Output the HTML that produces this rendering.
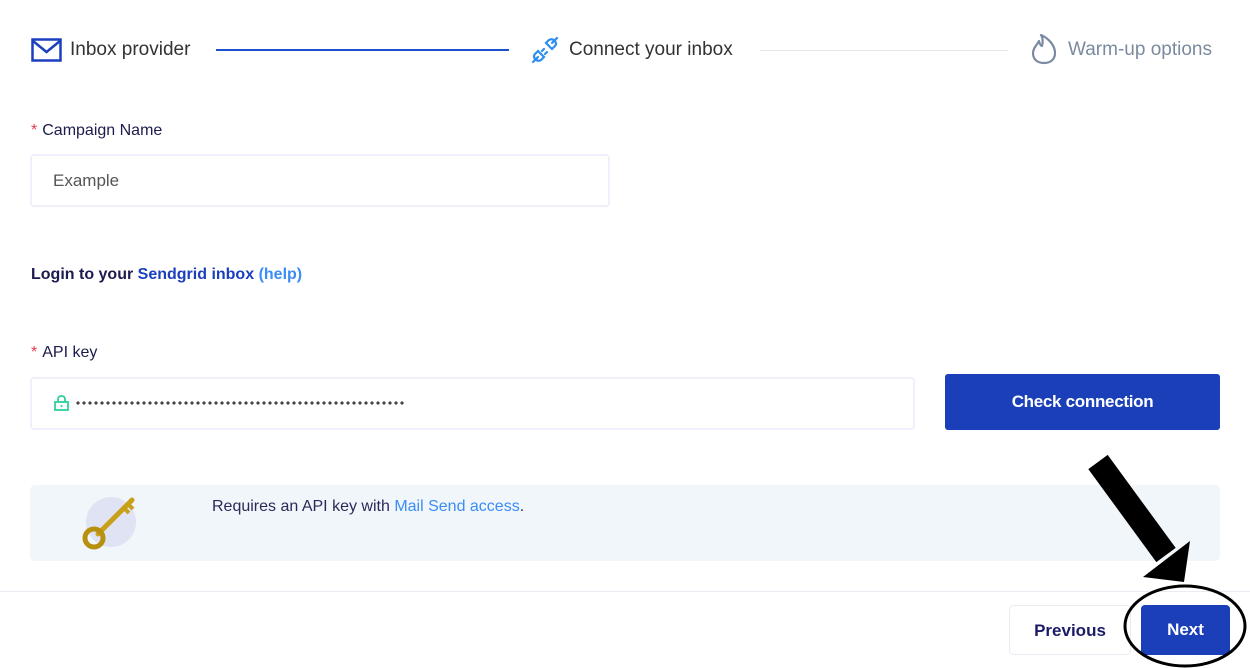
<!DOCTYPE html>
<html><head><meta charset="utf-8"><style>
*{box-sizing:border-box;margin:0;padding:0}
body{width:1250px;height:668px;background:#fff;font-family:"Liberation Sans",sans-serif;position:relative;overflow:hidden;color:#1b1b4d}
.a{position:absolute}
.lbl{font-size:16px;color:#1b1b4d;font-weight:500}
.lbl span{color:#e53950;margin-right:5px}
.inp{border:2px solid #eef1fb;border-radius:4px;background:#fff}
</style></head><body>
<svg class="a" style="left:31px;top:38px" width="31" height="24" viewBox="0 0 31 24"><rect x="1.5" y="1.5" width="28" height="21" fill="none" stroke="#1a3fbf" stroke-width="2.5"/><path d="M2 3 L15.5 14 L29 3" fill="none" stroke="#1a3fbf" stroke-width="2.5"/></svg>
<div class="a" style="left:70px;top:39px;font-size:19px;color:#333">Inbox provider</div>
<div class="a" style="left:216px;top:49px;width:293px;height:2px;background:#1a4fd0"></div>
<svg class="a" style="left:530px;top:35px" width="30" height="30" viewBox="0 0 30 30" fill="none" stroke="#2b8ef0" stroke-width="2.2" stroke-linecap="round"><path d="M3 27 L8 22"/><path d="M8 16 L14 22 L11 25 Q8 27 5 24 Q3 21 5 19 Z"/><path d="M27 3 L22 8"/><path d="M22 14 L16 8 L19 5 Q22 3 25 6 Q27 9 25 11 Z"/><path d="M12 16 L14 14 M15 19 L17 17"/></svg>
<div class="a" style="left:569px;top:39px;font-size:19px;color:#333">Connect your inbox</div>
<div class="a" style="left:760px;top:50px;width:248px;height:1px;background:#e6e8ee"></div>
<svg class="a" style="left:1031px;top:34px" width="26" height="31" viewBox="0 0 26 31" fill="none" stroke="#7a8aa0" stroke-width="2.2" stroke-linejoin="round"><path d="M13 29 C5 29 2 24 2 19 C2 14 6 11 8 7 C9 11 10 12 11 12 C12 8 12 4 10 1 C17 4 24 11 24 19 C24 25 20 29 13 29 Z"/></svg>
<div class="a" style="left:1068px;top:39px;font-size:19px;color:#7a8aa0">Warm-up options</div>

<div class="a lbl" style="left:31px;top:122px"><span>*</span>Campaign Name</div>
<div class="a inp" style="left:30px;top:154px;width:580px;height:53px"></div>
<div class="a" style="left:53px;top:171px;font-size:17px;color:#555">Example</div>

<div class="a" style="left:31px;top:266px;font-size:16px;font-weight:bold;color:#1b1b4d">Login to your <span style="color:#1a3fbf">Sendgrid inbox</span> <span style="color:#3b8cf5">(help)</span></div>

<div class="a lbl" style="left:31px;top:344px"><span>*</span>API key</div>
<div class="a inp" style="left:30px;top:377px;width:885px;height:53px"></div>
<svg class="a" style="left:54px;top:395px" width="15" height="16" viewBox="0 0 15 16" fill="none" stroke="#2fcf9f" stroke-width="1.8"><rect x="1" y="7" width="13" height="8"/><path d="M4 7 V4.5 Q4 1 7.5 1 Q11 1 11 4.5 V7"/><path d="M7.5 10 V12"/></svg>
<div class="a" style="left:76px;top:401px;width:330px;height:4px;background:radial-gradient(circle at 2px 2px,#444 1.5px,transparent 1.8px) 0 0/6px 4px repeat-x"></div>
<div class="a" style="left:945px;top:374px;width:275px;height:56px;background:#1a3fb8;border-radius:3px;color:#fff;font-weight:bold;font-size:17px;text-align:center;line-height:56px;letter-spacing:-0.3px">Check connection</div>

<div class="a" style="left:30px;top:485px;width:1190px;height:76px;background:#f0f6fa;border-radius:5px"></div>
<div class="a" style="left:86px;top:497px;width:50px;height:50px;border-radius:50%;background:#dfe3f3"></div>
<svg class="a" style="left:80px;top:494px" width="60" height="60" viewBox="0 0 60 60"><path d="M18 40 L52 6" stroke="#c9a01a" stroke-width="5" stroke-linecap="round"/><path d="M43 13 L49 19 M47 9 L53 15" stroke="#c9a01a" stroke-width="4"/><circle cx="14" cy="44" r="9" fill="none" stroke="#b8900f" stroke-width="5"/></svg>
<div class="a" style="left:212px;top:498px;font-size:16px;color:#2a2a5a">Requires an API key with <span style="color:#3b8cf5">Mail Send access</span>.</div>

<div class="a" style="left:0;top:591px;width:1250px;height:1px;background:#e8ecf2"></div>
<div class="a" style="left:1009px;top:605px;width:122px;height:50px;border:1px solid #e8ecf2;border-radius:4px;text-align:center;line-height:50px;font-weight:bold;font-size:17px;color:#1b1b6a">Previous</div>
<div class="a" style="left:1141px;top:605px;width:89px;height:50px;background:#1a3fb8;border-radius:4px;text-align:center;line-height:50px;font-weight:bold;font-size:17px;color:#fff">Next</div>

<svg class="a" style="left:0;top:0" width="1250" height="668"><line x1="1098" y1="462" x2="1166" y2="555" stroke="#000" stroke-width="24"/><polygon points="1143,577 1190,541 1184,582" fill="#000"/><ellipse cx="1185" cy="626" rx="60" ry="40" fill="none" stroke="#000" stroke-width="3"/></svg>
</body></html>
